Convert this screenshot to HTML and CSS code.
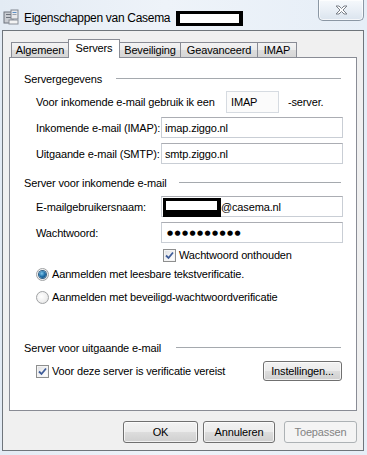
FILE: index.html
```html
<!DOCTYPE html>
<html lang="nl">
<head>
<meta charset="utf-8">
<title>Eigenschappen van Casema</title>
<link rel="stylesheet" href="styles.css">
</head>
<body>
<div class="window">
  <div class="titlebar">
    <svg class="app-icon" width="16" height="16" viewBox="0 0 16 16">
      <rect x="1" y="3" width="9" height="11" fill="#c9ccd2" stroke="#6d737c"/>
      <rect x="3" y="5" width="5" height="1" fill="#6d737c"/>
      <rect x="3" y="8" width="5" height="1" fill="#6d737c"/>
      <rect x="8" y="1" width="7" height="9" fill="#e8e9ec" stroke="#80868f"/>
      <rect x="9.5" y="3" width="4" height="1" fill="#5b8fc7"/>
      <rect x="9.5" y="5" width="4" height="1" fill="#9aa0a8"/>
      <rect x="6" y="11" width="9" height="4" fill="#f3f3f3" stroke="#8a9099"/>
    </svg>
    <span class="title">Eigenschappen van Casema</span>
    <span class="redact redact-title"></span>
    <div class="close" aria-label="Sluiten">
      <svg width="13" height="10" viewBox="0 0 13 10">
        <path d="M1 1 H4 L6.5 3.5 L9 1 H12 L8 5 L12 9 H9 L6.5 6.5 L4 9 H1 L5 5 Z" fill="#ffffff" stroke="#7a8089" stroke-width="1" stroke-linejoin="round"/>
      </svg>
    </div>
  </div>

  <div class="client">
    <div class="tabs">
      <div class="tab t-alg">Algemeen</div>
      <div class="tab t-srv selected">Servers</div>
      <div class="tab t-bev">Beveiliging</div>
      <div class="tab t-gea">Geavanceerd</div>
      <div class="tab t-imap">IMAP</div>
    </div>

    <div class="panel">
      <div class="group-head"><span>Servergegevens</span><i class="rule"></i></div>

      <div class="row row-type">
        <span class="type-text">Voor inkomende e-mail gebruik ik een</span>
        <span class="type-box">IMAP</span>
        <span class="type-suffix">-server.</span>
      </div>

      <div class="row row-in">
        <span class="label">Inkomende e-mail (IMAP):</span>
        <span class="field">imap.ziggo.nl</span>
      </div>

      <div class="row row-out">
        <span class="label">Uitgaande e-mail (SMTP):</span>
        <span class="field">smtp.ziggo.nl</span>
      </div>

      <div class="group-head head-in"><span>Server voor inkomende e-mail</span><i class="rule"></i></div>

      <div class="row row-user">
        <span class="label">E-mailgebruikersnaam:</span>
        <span class="field field-user"><span class="redact redact-user"></span>@casema.nl</span>
      </div>

      <div class="row row-pass">
        <span class="label">Wachtwoord:</span>
        <span class="field"><span class="dots">●●●●●●●●●●</span></span>
      </div>

      <div class="row row-remember">
        <span class="checkbox checked">
          <svg width="9" height="9" viewBox="0 0 9 9"><path d="M1 4.5 L3.5 7 L8 1.5" fill="none" stroke="#3f5d99" stroke-width="1.8"/></svg>
        </span>
        <span class="opt-text">Wachtwoord onthouden</span>
      </div>

      <div class="row row-radio1">
        <span class="radio checked"><i></i></span>
        <span class="opt-text">Aanmelden met leesbare tekstverificatie.</span>
      </div>

      <div class="row row-radio2">
        <span class="radio"></span>
        <span class="opt-text">Aanmelden met beveiligd-wachtwoordverificatie</span>
      </div>

      <div class="group-head head-out"><span>Server voor uitgaande e-mail</span><i class="rule"></i></div>

      <div class="row row-auth">
        <span class="checkbox checked">
          <svg width="9" height="9" viewBox="0 0 9 9"><path d="M1 4.5 L3.5 7 L8 1.5" fill="none" stroke="#3f5d99" stroke-width="1.8"/></svg>
        </span>
        <span class="opt-text">Voor deze server is verificatie vereist</span>
        <button class="btn btn-settings">Instellingen...</button>
      </div>
    </div>

    <div class="buttons">
      <button class="btn btn-ok">OK</button>
      <button class="btn btn-cancel">Annuleren</button>
      <button class="btn btn-apply" disabled>Toepassen</button>
    </div>
  </div>
</div>
</body>
</html>
```

FILE: styles.css
```css
* { box-sizing: border-box; }

html, body {
  margin: 0;
  padding: 0;
}

body {
  width: 367px;
  height: 455px;
  overflow: hidden;
  font-family: "Liberation Sans", Arial, sans-serif;
  font-size: 11px;
  letter-spacing: -0.15px;
  color: #000;
  white-space: nowrap;
  background: linear-gradient(to right, #e3ebf4 0%, #eef3f9 45%, #e6eef7 100%);
}

.window {
  width: 367px;
  height: 455px;
  display: flex;
  flex-direction: column;
}

/* ---------- title bar ---------- */
.titlebar {
  height: 30px;
  display: flex;
  align-items: flex-start;
  padding-left: 3px;
}

.app-icon {
  margin-top: 9px;
  flex: none;
}

.title {
  margin-left: 5px;
  margin-top: 10px;
  font-size: 12px;
  letter-spacing: -0.3px;
  line-height: 16px;
  color: #000;
}

.redact {
  display: inline-block;
  background: #fff;
  border-style: solid;
  border-color: #000;
}

.redact-title {
  margin-left: 6px;
  margin-top: 11px;
  width: 67px;
  height: 15px;
  border-width: 3px 4px 3px 4px;
}

.close {
  margin-left: auto;
  margin-right: 3px;
  width: 46px;
  height: 21px;
  border: 1px solid #8b97a4;
  border-top: none;
  border-radius: 0 0 5px 5px;
  background: linear-gradient(#f6f9fc 0%, #e9eff6 50%, #dbe4ee 100%);
  box-shadow: inset 0 0 0 1px rgba(255,255,255,0.7);
  display: flex;
  align-items: center;
  justify-content: center;
  padding-bottom: 1px;
}

/* ---------- client area ---------- */
.client {
  margin-left: 2px;
  width: 362px;
  height: 421px;
  border: 1px solid #6f757b;
  background: #f0f0f0;
  padding: 8px 6px 0 6px;
  display: flex;
  flex-direction: column;
}

/* ---------- tabs ---------- */
.tabs {
  height: 18px;
  display: flex;
  align-items: flex-end;
  padding-left: 2px;
  position: relative;
  z-index: 1;
}

.tab {
  height: 15px;
  margin-left: -1px;
  border: 1px solid #898c95;
  border-bottom: none;
  background: linear-gradient(#f3f3f3 0%, #ebebeb 50%, #dddddd 51%, #d6d6d6 100%);
  text-align: center;
  line-height: 14px;
}

.t-alg { width: 58px; margin-left: 0; }
.t-srv { width: 52px; }
.t-bev { width: 62px; }
.t-gea { width: 78px; }
.t-imap { width: 40px; }

.tab.selected {
  height: 19px;
  margin-bottom: -1px;
  background: #fff;
  line-height: 16px;
  position: relative;
  z-index: 2;
}

/* ---------- panel ---------- */
.panel {
  height: 354px;
  border: 1px solid #898c95;
  background: #fff;
  padding: 13px 13px 0 14px;
  display: flex;
  flex-direction: column;
}

.group-head {
  height: 16px;
  display: flex;
  align-items: center;
  flex: none;
}

.group-head .rule {
  flex: 1;
  height: 1px;
  background: #a5a9ae;
  margin-left: 14px;
  margin-right: 2px;
  margin-top: -1px;
}

.head-in { margin-top: 11px; }
.head-in .rule { margin-left: 12px; }
.head-out { margin-top: 36px; }
.head-out .rule { margin-left: 15px; }

.row {
  display: flex;
  align-items: center;
  padding-left: 12px;
  flex: none;
}

.label {
  width: 125px;
  flex: none;
}

.field {
  flex: 1;
  height: 21px;
  border: 1px solid #c9ced5;
  border-top-color: #abadb3;
  padding-left: 3px;
  display: flex;
  align-items: center;
  background: #fff;
}

.row-type { height: 22px; margin-top: 4px; }
.type-text { width: 190px; flex: none; }
.type-box {
  width: 53px;
  height: 22px;
  border: 1px solid #d6dbe1;
  background: #fbfbfb;
  padding-left: 4px;
  display: flex;
  align-items: center;
}
.type-suffix { margin-left: 9px; }

.row-in { height: 21px; margin-top: 4px; }
.row-out { height: 21px; margin-top: 5px; }
.row-user { height: 21px; margin-top: 5px; }
.row-pass { height: 21px; margin-top: 5px; }

.field-user { padding-left: 1px; }

.redact-user {
  width: 58px;
  height: 19px;
  border-width: 3px 4px 7px 3px;
  margin-top: 1px;
}

.dots {
  font-family: "DejaVu Sans", sans-serif;
  font-size: 7px;
  letter-spacing: 1.4px;
  padding-left: 2px;
}

.row-remember { height: 14px; margin-top: 5px; padding-left: 139px; }
.row-radio1 { height: 14px; margin-top: 5px; }
.row-radio2 { height: 14px; margin-top: 9px; }
.row-auth { height: 20px; margin-top: 5px; }

.checkbox {
  width: 13px;
  height: 13px;
  flex: none;
  border: 1px solid #8e8f8f;
  background: linear-gradient(135deg, #dcdde0 0%, #f6f6f7 60%, #ffffff 100%);
  box-shadow: inset 0 0 0 1px #f4f4f4;
  display: flex;
  align-items: center;
  justify-content: center;
}

.radio {
  width: 13px;
  height: 13px;
  flex: none;
  border: 1px solid #a0a2a4;
  border-radius: 50%;
  background: radial-gradient(circle at 40% 40%, #ffffff 0%, #f0f0f0 55%, #dadada 100%);
  display: flex;
  align-items: center;
  justify-content: center;
}

.radio.checked i {
  display: block;
  width: 7px;
  height: 7px;
  border-radius: 50%;
  background: radial-gradient(circle at 40% 35%, #7fc6ea 0%, #1f6fa8 50%, #0c3f6b 100%);
  box-shadow: 0 0 0 1px #2f5f86;
}

.opt-text { margin-left: 3px; }

/* ---------- buttons ---------- */
.btn {
  font-family: "Liberation Sans", Arial, sans-serif;
  font-size: 11px;
  letter-spacing: -0.15px;
  color: #000;
  border: 1px solid #707070;
  border-radius: 3px;
  background: linear-gradient(#f2f2f2 0%, #ebebeb 50%, #dddddd 51%, #cfcfcf 100%);
  box-shadow: inset 0 0 0 1px rgba(255,255,255,0.7);
  padding: 0;
  margin: 0;
}

.btn-settings {
  margin-left: auto;
  margin-right: 1px;
  width: 79px;
  height: 20px;
}

.buttons {
  margin-top: 10px;
  height: 22px;
  display: flex;
  justify-content: flex-end;
}

.btn-ok { width: 75px; height: 22px; }
.btn-cancel { width: 72px; height: 22px; margin-left: 5px; }
.btn-apply {
  width: 73px;
  height: 22px;
  margin-left: 9px;
  border-color: #adb2b5;
  background: #f4f4f4;
  color: #838383;
  box-shadow: none;
}
```
